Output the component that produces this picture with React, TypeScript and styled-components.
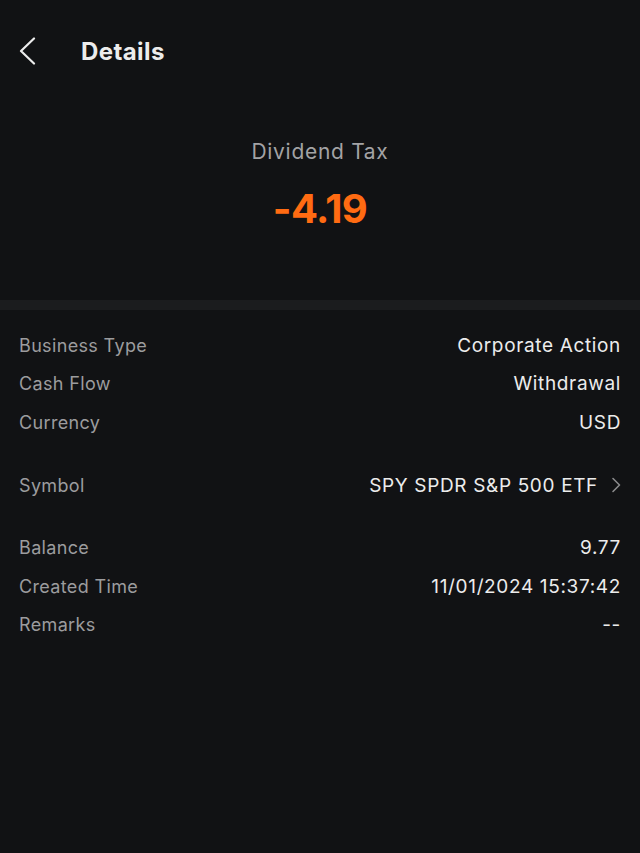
import styled, { createGlobalStyle } from "styled-components";

const GlobalStyle = createGlobalStyle`
  html, body {
    margin: 0;
    padding: 0;
    background: #111214;
  }
  body {
    font-family: Inter, "Noto Sans", sans-serif;
    -webkit-font-smoothing: antialiased;
  }
`;

const Page = styled.div`
  width: 640px;
  min-height: 853px;
  background: #111214;
  display: flex;
  flex-direction: column;
`;

const Header = styled.header`
  height: 102px;
  display: flex;
  align-items: center;
  padding: 0 0 0 18px;
  gap: 41px;
`;

const BackButton = styled.button`
  background: none;
  border: none;
  padding: 0;
  width: 22px;
  height: 30px;
  display: flex;
  align-items: center;
  cursor: pointer;
`;

const Title = styled.h1`
  margin: 0;
  font-size: 24px;
  font-weight: 700;
  color: #ececec;
  letter-spacing: 0.4px;
  line-height: 30px;
  margin-top: 2px;
`;

const Summary = styled.section`
  display: flex;
  flex-direction: column;
  align-items: center;
  height: 198px;
  padding-top: 35px;
  box-sizing: border-box;
`;

const SummaryLabel = styled.div`
  font-size: 21px;
  color: #a3a3a5;
  line-height: 30px;
  letter-spacing: 0.7px;
`;

const Amount = styled.div`
  margin-top: 22px;
  font-size: 40px;
  font-weight: 700;
  color: #ff6b12;
  letter-spacing: -0.6px;
  line-height: 40px;
`;

const Divider = styled.div`
  height: 10px;
  background: #1b1c1e;
`;

const List = styled.div`
  display: flex;
  flex-direction: column;
  padding: 16px 19px 0 19px;
`;

const Group = styled.div`
  display: flex;
  flex-direction: column;
  & + & {
    margin-top: 24px;
  }
`;

const Row = styled.div`
  display: flex;
  justify-content: space-between;
  align-items: center;
  height: 38.6px;
`;

const Label = styled.span`
  font-size: 18px;
  color: #9c9c9e;
  letter-spacing: 0.35px;
`;

const Value = styled.span`
  font-size: 19px;
  color: #ececec;
  letter-spacing: 0.65px;
  display: flex;
  align-items: center;
  gap: 13px;
`;

const Chevron = () => (
  <svg width="10" height="16" viewBox="0 0 10 16" fill="none">
    <path d="M2 1.5 L8.5 8 L2 14.5" stroke="#8a8a8c" strokeWidth="1.6" strokeLinecap="round" strokeLinejoin="round" />
  </svg>
);

type Item = { label: string; value: string; link?: boolean };

const groups: Item[][] = [
  [
    { label: "Business Type", value: "Corporate Action" },
    { label: "Cash Flow", value: "Withdrawal" },
    { label: "Currency", value: "USD" },
  ],
  [{ label: "Symbol", value: "SPY SPDR S&P 500 ETF", link: true }],
  [
    { label: "Balance", value: "9.77" },
    { label: "Created Time", value: "11/01/2024 15:37:42" },
    { label: "Remarks", value: "--" },
  ],
];

const App = () => {
  return (
    <Page>
      <GlobalStyle />
      <Header>
        <BackButton>
          <svg width="20" height="28" viewBox="0 0 20 28" fill="none">
            <path d="M16 1.5 L3 14 L16 26.5" stroke="#ececec" strokeWidth="2.2" strokeLinecap="round" strokeLinejoin="round" />
          </svg>
        </BackButton>
        <Title>Details</Title>
      </Header>
      <Summary>
        <SummaryLabel>Dividend Tax</SummaryLabel>
        <Amount>-4.19</Amount>
      </Summary>
      <Divider />
      <List>
        {groups.map((group, i) => (
          <Group key={i}>
            {group.map((item) => (
              <Row key={item.label}>
                <Label>{item.label}</Label>
                <Value>
                  {item.value}
                  {item.link && <Chevron />}
                </Value>
              </Row>
            ))}
          </Group>
        ))}
      </List>
    </Page>
  );
};

export default App;
